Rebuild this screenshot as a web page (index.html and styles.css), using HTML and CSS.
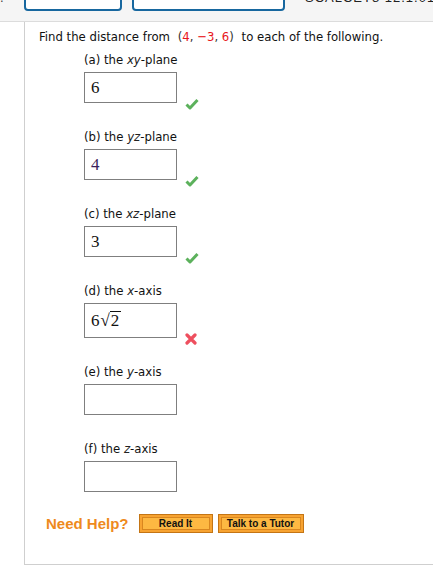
FILE: index.html
```html
<!DOCTYPE html>
<html>
<head>
<meta charset="utf-8">
<link rel="stylesheet" href="styles.css">
</head>
<body>
<div class="topbar">
  <span class="tick">:</span>
  <span class="tab tab-a"></span>
  <span class="tab tab-b"></span>
  <span class="toptext">SCALCET8 12.1.016</span>
</div>
<div class="panel">
  <p class="question">Find the distance from <span class="pt">(<span class="r">4</span>, <span class="r">&minus;3</span>, <span class="r">6</span>)</span> to each of the following.</p>

  <div class="item">
    <div class="label">(a) the <i>xy</i>-plane</div>
    <div class="row">
      <div class="box"><span class="val">6</span></div>
      <svg class="icon" width="14" height="12" viewBox="0 0 14 12"><path d="M1.5 6.5 L5 10 L12.5 2" fill="none" stroke="#5cb15c" stroke-width="3" stroke-linejoin="round"/></svg>
    </div>
  </div>

  <div class="item">
    <div class="label">(b) the <i>yz</i>-plane</div>
    <div class="row">
      <div class="box"><span class="val purple">4</span></div>
      <svg class="icon" width="14" height="12" viewBox="0 0 14 12"><path d="M1.5 6.5 L5 10 L12.5 2" fill="none" stroke="#5cb15c" stroke-width="3" stroke-linejoin="round"/></svg>
    </div>
  </div>

  <div class="item">
    <div class="label">(c) the <i>xz</i>-plane</div>
    <div class="row">
      <div class="box"><span class="val">3</span></div>
      <svg class="icon" width="14" height="12" viewBox="0 0 14 12"><path d="M1.5 6.5 L5 10 L12.5 2" fill="none" stroke="#5cb15c" stroke-width="3" stroke-linejoin="round"/></svg>
    </div>
  </div>

  <div class="item">
    <div class="label">(d) the <i>x</i>-axis</div>
    <div class="row">
      <div class="box tall"><span class="val">6<span class="rad">&radic;</span><span class="over">2</span></span></div>
      <svg class="icon" width="12" height="12" viewBox="0 0 12 12"><path d="M2 2 L10 10 M10 2 L2 10" fill="none" stroke="#ee4f5e" stroke-width="3.2" stroke-linecap="round"/></svg>
    </div>
  </div>

  <div class="item">
    <div class="label">(e) the <i>y</i>-axis</div>
    <div class="row">
      <div class="box"></div>
    </div>
  </div>

  <div class="item">
    <div class="label">(f) the <i>z</i>-axis</div>
    <div class="row">
      <div class="box"></div>
    </div>
  </div>

  <div class="help">
    <span class="need">Need Help?</span>
    <span class="btn w1"><span class="inner">Read It</span></span>
    <span class="btn w2"><span class="inner">Talk to a Tutor</span></span>
  </div>
</div>
</body>
</html>
```

FILE: styles.css
```css
html, body {
  margin: 0;
  padding: 0;
  background: #fff;
}
body {
  font-family: "DejaVu Sans Condensed", "DejaVu Sans", sans-serif;
  font-stretch: condensed;
  font-size: 13px;
  color: #111;
  width: 433px;
  height: 570px;
  overflow: hidden;
}
.topbar {
  height: 21px;
  background: #f5f5f5;
  border-bottom: 1px solid #dcdcdc;
  display: flex;
  align-items: flex-end;
  overflow: hidden;
  position: relative;
}
.tick {
  position: absolute;
  left: 0;
  top: -9px;
  font-size: 12px;
  color: #333;
}
.tab {
  box-sizing: border-box;
  height: 30px;
  border: 2px solid #17679f;
  border-radius: 4px;
  background: #fff;
  margin-bottom: 10px;
  flex: none;
}
.tab-a {
  width: 98px;
  margin-left: 24px;
}
.tab-b {
  width: 153px;
  margin-left: 10px;
}
.toptext {
  align-self: flex-start;
  margin-top: -10px;
  margin-left: 20px;
  font-family: "Liberation Sans", sans-serif;
  font-size: 13px;
  letter-spacing: 1px;
  color: #222;
  white-space: nowrap;
}
.panel {
  margin-left: 24px;
  height: 535px;
  border-left: 1px solid #cfcfcf;
  border-bottom: 1px solid #cfcfcf;
  padding-left: 14px;
  padding-top: 7px;
}
.question {
  margin: 0;
  line-height: 16px;
}
.pt {
  margin: 0 4px;
  color: #333;
}
.r {
  color: #e8161c;
}
.item {
  margin-left: 45px;
}
.question + .item {
  margin-top: 7px;
}
.label {
  line-height: 16px;
  height: 16px;
}
.label i {
  color: #222;
}
.row {
  display: flex;
  align-items: flex-end;
  margin-top: 4px;
  margin-bottom: 26px;
}
.box {
  box-sizing: border-box;
  width: 93px;
  height: 31px;
  border: 1px solid #7f7f7f;
  background: #fff;
  display: flex;
  align-items: center;
  padding-left: 6px;
}
.box.tall {
  height: 35px;
}
.val {
  font-family: "Liberation Serif", serif;
  font-size: 17px;
  color: #111;
  line-height: 20px;
}
.val.purple {
  color: #3a1f5a;
}
.rad {
  margin-left: 1px;
}
.over {
  border-top: 1px solid #111;
  padding: 0 2px 0 1px;
  display: inline-block;
  line-height: 17px;
}
.icon {
  margin-left: 8px;
  margin-bottom: -7px;
  flex: none;
}
.help {
  display: flex;
  align-items: center;
  margin-left: 7px;
  margin-top: -4px;
}
.need {
  font-family: "Liberation Sans", Arial, sans-serif;
  font-weight: bold;
  font-size: 15px;
  color: #ee8a1d;
  margin-right: 10px;
}
.btn {
  box-sizing: border-box;
  height: 19px;
  border: 1px solid #c47515;
  background: #f7a331;
  padding: 2px;
  display: flex;
  margin-right: 5px;
}
.w1 { width: 74px; }
.w2 { width: 86px; }
.inner {
  flex: 1;
  border: 1px solid #d9861f;
  background: #fdb842;
  font-family: "Liberation Sans", Arial, sans-serif;
  font-weight: bold;
  font-size: 10px;
  line-height: 11px;
  color: #111;
  text-align: center;
}
```
